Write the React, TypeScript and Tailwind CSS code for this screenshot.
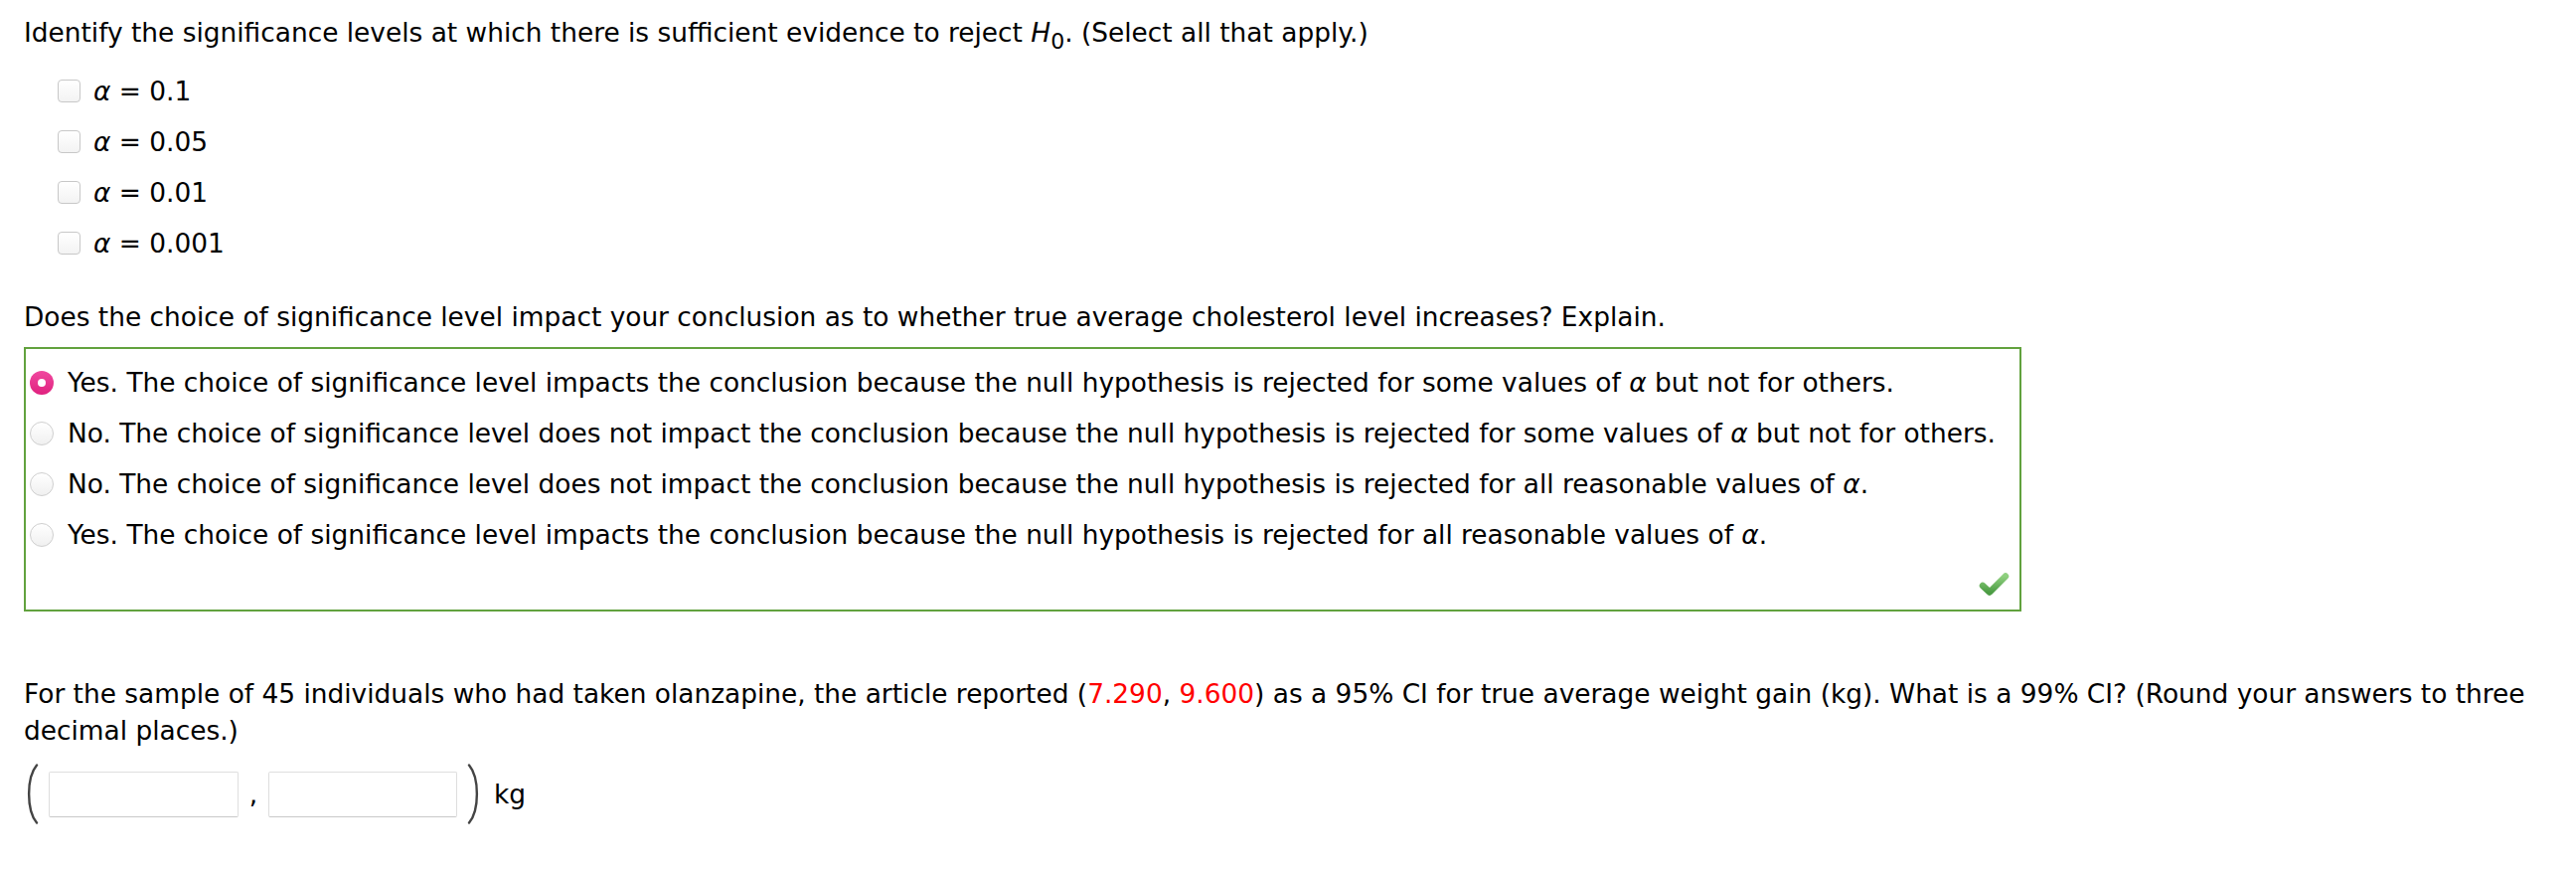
import React from "react";

const levels = ["0.1", "0.05", "0.01", "0.001"];

const choices = [
  {
    before: "Yes. The choice of significance level impacts the conclusion because the null hypothesis is rejected for some values of ",
    after: " but not for others.",
  },
  {
    before: "No. The choice of significance level does not impact the conclusion because the null hypothesis is rejected for some values of ",
    after: " but not for others.",
  },
  {
    before: "No. The choice of significance level does not impact the conclusion because the null hypothesis is rejected for all reasonable values of ",
    after: ".",
  },
  {
    before: "Yes. The choice of significance level impacts the conclusion because the null hypothesis is rejected for all reasonable values of ",
    after: ".",
  },
];

const Alpha = () => <span className="italic">α</span>;

const Paren = ({ flip }: { flip?: boolean }) => (
  <svg width="14" height="61" viewBox="0 0 14 61" className={flip ? "-scale-x-100" : ""}>
    <path d="M12 1.5 C 1.5 14, 1.5 47, 12 59.5" fill="none" stroke="#444" strokeWidth="2.4" strokeLinecap="round" />
  </svg>
);

const CheckMark = () => (
  <svg width="31" height="25" viewBox="0 0 31 25">
    <defs>
      <linearGradient id="chk" x1="0" y1="0" x2="0" y2="1">
        <stop offset="0" stopColor="#8fd07f" />
        <stop offset="1" stopColor="#4c9c44" />
      </linearGradient>
    </defs>
    <path d="M4 14 L11 20.5 L27 4.5" fill="none" stroke="url(#chk)" strokeWidth="6.5" strokeLinecap="round" strokeLinejoin="round" />
  </svg>
);

export default function App() {
  return (
    <div className="min-h-[880px] w-full bg-white pl-[24px] pt-[14px] font-['DejaVu_Sans',Verdana,sans-serif] text-[26.4px] leading-[37px] text-black">
      <p>
        Identify the significance levels at which there is sufficient evidence to reject{" "}
        <span className="italic">H</span>
        <sub className="relative -bottom-[7px] text-[22px] not-italic">0</sub>. (Select all that apply.)
      </p>

      <div className="mt-[15px] flex flex-col pl-[34px]">
        {levels.map((lv) => (
          <div key={lv} className="flex h-[51px] items-center">
            <span className="h-[23px] w-[23px] rounded-[4px] border border-[#c8c8c8] bg-gradient-to-b from-white to-[#f3f3f3]" />
            <span className="ml-[13px] whitespace-pre">
              <Alpha /> = {lv}
            </span>
          </div>
        ))}
      </div>

      <p className="mt-[30px]">
        Does the choice of significance level impact your conclusion as to whether true average cholesterol level increases? Explain.
      </p>

      <div className="mt-[12px] w-[2010px] border-2 border-[#62a23e] pl-[4px] pt-[8px]">
        {choices.map((c, i) => (
          <div key={i} className="flex h-[51px] items-center">
            {i === 0 ? (
              <span className="flex h-[24px] w-[24px] items-center justify-center rounded-full bg-gradient-to-b from-[#f0479f] to-[#e0207f]">
                <span className="h-[8px] w-[8px] rounded-full bg-white" />
              </span>
            ) : (
              <span className="h-[24px] w-[24px] rounded-full border border-[#cfcfcf] bg-gradient-to-b from-white to-[#f0f0f0]" />
            )}
            <span className="ml-[14px]">
              {c.before}
              <Alpha />
              {c.after}
            </span>
          </div>
        ))}
        <div className="mt-[12px] flex justify-end pb-[13px] pr-[10px]">
          <CheckMark />
        </div>
      </div>

      <p className="mt-[64px]">
        For the sample of 45 individuals who had taken olanzapine, the article reported (
        <span className="text-[#ff0000]">7.290</span>, <span className="text-[#ff0000]">9.600</span>) as a 95% CI for
        true average weight gain (kg). What is a 99% CI? (Round your answers to three
        <br />
        decimal places.)
      </p>

      <div className="mt-[15px] flex h-[61px] items-center pl-px">
        <Paren />
        <input
          type="text"
          className="ml-[10px] h-[46px] w-[191px] rounded-[2px] border border-[#dedede] border-b-[#c9c9c9] bg-white outline-none"
        />
        <span className="w-[30px] text-center">,</span>
        <input
          type="text"
          className="h-[46px] w-[190px] rounded-[2px] border border-[#dedede] border-b-[#c9c9c9] bg-white outline-none"
        />
        <span className="ml-[10px]">
          <Paren flip />
        </span>
        <span className="ml-[13px]">kg</span>
      </div>
    </div>
  );
}
